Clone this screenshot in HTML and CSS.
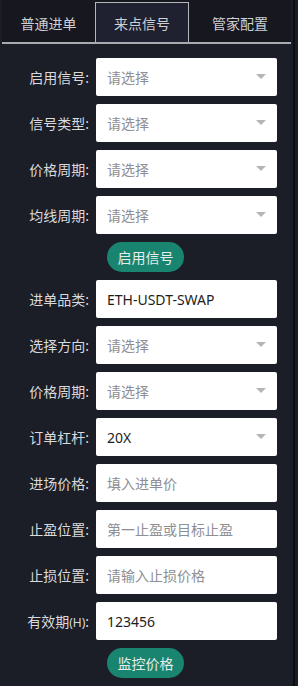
FILE: index.html
```html
<!DOCTYPE html>
<html lang="zh-CN">
<head>
  <meta charset="UTF-8">
  <meta name="viewport" content="width=device-width, initial-scale=1.0">
  <title>来点信号</title>
  <link rel="stylesheet" href="styles.css">
</head>
<body>
  <div class="app">
    <div class="panel">
      <div class="tabs">
        <div class="tab">普通进单</div>
        <div class="tab tab-active">来点信号</div>
        <div class="tab tab-wide">管家配置</div>
      </div>

      <div class="form">
        <div class="form-row">
          <label>启用信号:</label>
          <div class="select"><span class="placeholder">请选择</span><i class="arrow"></i></div>
        </div>
        <div class="form-row">
          <label>信号类型:</label>
          <div class="select"><span class="placeholder">请选择</span><i class="arrow"></i></div>
        </div>
        <div class="form-row">
          <label>价格周期:</label>
          <div class="select"><span class="placeholder">请选择</span><i class="arrow"></i></div>
        </div>
        <div class="form-row">
          <label>均线周期:</label>
          <div class="select"><span class="placeholder">请选择</span><i class="arrow"></i></div>
        </div>
        <div class="button-row">
          <button class="button">启用信号</button>
        </div>

        <div class="form-row">
          <label>进单品类:</label>
          <div class="input"><span class="value">ETH-USDT-SWAP</span></div>
        </div>
        <div class="form-row">
          <label>选择方向:</label>
          <div class="select"><span class="placeholder">请选择</span><i class="arrow"></i></div>
        </div>
        <div class="form-row">
          <label>价格周期:</label>
          <div class="select"><span class="placeholder">请选择</span><i class="arrow"></i></div>
        </div>
        <div class="form-row">
          <label>订单杠杆:</label>
          <div class="select"><span class="value">20X</span><i class="arrow"></i></div>
        </div>
        <div class="form-row">
          <label>进场价格:</label>
          <div class="input"><span class="placeholder">填入进单价</span></div>
        </div>
        <div class="form-row">
          <label>止盈位置:</label>
          <div class="input"><span class="placeholder">第一止盈或目标止盈</span></div>
        </div>
        <div class="form-row">
          <label>止损位置:</label>
          <div class="input"><span class="placeholder">请输入止损价格</span></div>
        </div>
        <div class="form-row">
          <label>有效期<small>(H)</small>:</label>
          <div class="input"><span class="value">123456</span></div>
        </div>
        <div class="button-row">
          <button class="button">监控价格</button>
        </div>
      </div>
    </div>
    <div class="edge"></div>
  </div>
</body>
</html>
```

FILE: styles.css
```css
body {
  margin: 0;
  background-color: #1a1c25;
  font-family: "Noto Sans", "Noto Sans CJK SC", sans-serif;
  color: #d6d6d9;
}

.app {
  display: flex;
  width: 298px;
  height: 686px;
  overflow: hidden;
}

.panel {
  width: 292px;
  background-color: #1b1d27;
}

.edge {
  width: 2px;
  background-color: #0c0d11;
  margin-left: 1px;
}

.tabs {
  display: flex;
  height: 40px;
  padding-top: 2px;
  margin: 0 1px 0 2px;
  border-bottom: 2px solid #a9abb0;
  background-color: #16171f;
}

.tab {
  width: 91px;
  display: flex;
  align-items: center;
  justify-content: center;
  font-size: 14px;
  color: #cfd0d4;
  border: 1px solid transparent;
  border-bottom: none;
}

.tab-active {
  width: 92px;
  background-color: #1f2130;
  border-color: #b4b6bb;
}

.tab-wide {
  flex: 1;
}

.form {
  padding-top: 14px;
}

.form-row {
  display: flex;
  align-items: center;
  height: 38px;
  margin-bottom: 8px;
}

label {
  width: 96px;
  padding-right: 7px;
  text-align: right;
  font-size: 14px;
  color: #d9dadd;
  box-sizing: border-box;
  white-space: nowrap;
}

label small {
  font-size: 12px;
}

.select,
.input {
  position: relative;
  width: 181px;
  height: 38px;
  display: flex;
  align-items: center;
  padding: 0 11px;
  box-sizing: border-box;
  background-color: #fff;
  border-radius: 2px;
  font-size: 14px;
}

.placeholder {
  color: #8e8e93;
}

.value {
  color: #1e1e22;
}

.arrow {
  position: absolute;
  right: 11px;
  top: 16px;
  width: 0;
  height: 0;
  border-left: 5px solid transparent;
  border-right: 5px solid transparent;
  border-top: 5px solid #b5b5b9;
}

.button-row {
  display: flex;
  height: 30px;
  margin: 0 0 8px;
  padding-left: 107px;
}

.button {
  width: 77px;
  height: 30px;
  border: none;
  border-radius: 15px;
  background-color: #198570;
  color: #e6ece9;
  font-family: inherit;
  font-size: 14px;
  padding: 0;
}
```
